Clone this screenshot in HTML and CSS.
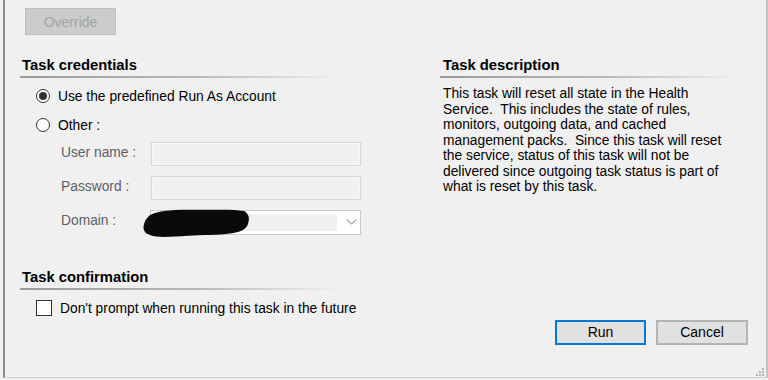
FILE: index.html
```html
<!DOCTYPE html>
<html>
<head>
<meta charset="utf-8">
<link rel="stylesheet" href="styles.css">
</head>
<body>
<div class="frame">
  <div class="top-row">
    <button class="btn btn-disabled" disabled>Override</button>
  </div>
  <div class="main">
    <div class="col-left">
      <section class="section">
        <div class="title title-left">Task credentials</div>
        <div class="radios">
          <div class="choice"><span class="radio checked"></span><span>Use the predefined Run As Account</span></div>
          <div class="choice"><span class="radio"></span><span>Other :</span></div>
        </div>
        <div class="form">
          <span class="lbl">User name :</span><span class="field"></span>
          <span class="lbl">Password :</span><span class="field"></span>
          <span class="lbl">Domain :</span>
          <span class="field select">
            <span class="select-inner"></span>
            <svg class="chevron" width="11" height="6" viewBox="0 0 11 6"><path d="M0.5 0.5 L5.5 5 L10.5 0.5" fill="none" stroke="#a8a8a8" stroke-width="1.1"/></svg>
            <svg class="scribble" width="110" height="30" viewBox="0 0 110 30"><path d="M6 9 C10 5 18 3 28 2.5 C40 1.5 55 2 70 1.8 C82 1.5 94 1.5 101 3 C107 5 108 10 106 16 C104 22 98 24 88 25.5 C76 27 60 27 46 27.8 C34 28.5 22 29.5 14 28.5 C6 27.5 1 24 1.5 19 C2 15 3 12 6 9 Z" fill="#0a0a0a"/><path d="M4 20 C2 22 3 25 6 26 L8 24 Z M100 4 L105 8 L103 3 Z" fill="#0a0a0a"/></svg>
          </span>
        </div>
      </section>
      <section class="section confirm">
        <div class="title title-left">Task confirmation</div>
        <div class="choice check-row"><span class="checkbox"></span><span>Don't prompt when running this task in the future</span></div>
      </section>
    </div>
    <div class="col-right">
      <div class="title title-right">Task description</div>
      <p class="desc">This task will reset all state in the Health<br>Service.&nbsp; This includes the state of rules,<br>monitors, outgoing data, and cached<br>management packs.&nbsp; Since this task will reset<br>the service, status of this task will not be<br>delivered since outgoing task status is part of<br>what is reset by this task.</p>
      <div class="buttons">
        <button class="btn btn-primary">Run</button>
        <button class="btn btn-normal">Cancel</button>
      </div>
    </div>
  </div>
  <svg class="grip" width="8" height="8" viewBox="0 0 8 8">
    <rect x="6" y="0" width="2" height="2" fill="#b4b4b4"/>
    <rect x="3" y="3" width="2" height="2" fill="#b4b4b4"/>
    <rect x="6" y="3" width="2" height="2" fill="#b4b4b4"/>
    <rect x="0" y="6" width="2" height="2" fill="#b4b4b4"/>
    <rect x="3" y="6" width="2" height="2" fill="#b4b4b4"/>
    <rect x="6" y="6" width="2" height="2" fill="#b4b4b4"/>
  </svg>
</div>
</body>
</html>
```
FILE: styles.css
```css
html, body {
  margin: 0;
  padding: 0;
  background: #f0f0f0;
}
body {
  font-family: "Liberation Sans", Arial, sans-serif;
  font-size: 13.8px;
  color: #000;
  width: 768px;
  height: 380px;
  overflow: hidden;
}
.frame {
  position: relative;
  box-sizing: border-box;
  margin-left: 3px;
  width: 765px;
  height: 378px;
  border-left: 2px solid #8a8a8a;
  border-right: 2px solid #c4c4c4;
  border-bottom: 1px solid #cfcfcf;
  padding: 8px 0 0 15px;
}
.top-row {
  display: flex;
  padding-left: 5px;
}
.btn {
  font-family: "Liberation Sans", Arial, sans-serif;
  font-size: 14px;
  box-sizing: border-box;
  margin: 0;
  padding: 0;
  display: flex;
  align-items: center;
  justify-content: center;
}
.btn-disabled {
  width: 91px;
  height: 27px;
  background: #cccccc;
  border: 1px solid #bfbfbf;
  color: #a2a2a2;
}
.main {
  display: grid;
  grid-template-columns: 400px 308px;
  column-gap: 20px;
  margin-top: 20px;
}
.title {
  font-weight: bold;
  font-size: 14.8px;
  line-height: 20px;
  height: 20px;
  padding-bottom: 3px;
  background: linear-gradient(to right, #9a9a9a 0%, #b8b8b8 55%, rgba(240,240,240,0) 100%) left bottom / 100% 2px no-repeat;
}
.title-left {
  width: 318px;
  padding-left: 2px;
}
.title-right {
  width: 297px;
  padding-left: 3px;
}
.radios {
  display: flex;
  flex-direction: column;
  gap: 9px;
  margin-top: 8px;
  padding-left: 16px;
}
.choice {
  display: flex;
  align-items: center;
  gap: 8px;
  height: 20px;
}
.radio {
  box-sizing: border-box;
  width: 14px;
  height: 14px;
  border: 1px solid #333;
  border-radius: 50%;
  background: #fff;
  display: flex;
  align-items: center;
  justify-content: center;
}
.radio.checked::after {
  content: "";
  width: 8px;
  height: 8px;
  border-radius: 50%;
  background: #333;
}
.form {
  display: grid;
  grid-template-columns: 90px 210px;
  grid-auto-rows: 24px;
  row-gap: 10px;
  margin-top: 7px;
  margin-left: 41px;
  align-items: center;
}
.lbl {
  color: #5e5e66;
  line-height: 20px;
  margin-top: -3px;
}
.field {
  box-sizing: border-box;
  height: 24px;
  border: 1px solid #d6d6d6;
  box-shadow: inset 0 0 0 1px #f6f6f6;
  background: #f0f0f0;
}
.select {
  position: relative;
  margin-left: -1px;
  width: 211px;
  height: 25px;
  background: #fff;
  border-color: #c9c9c9;
  box-shadow: none;
  display: flex;
  align-items: center;
  padding: 3px;
}
.select-inner {
  width: 183px;
  height: 17px;
  background: #f0f0f0;
}
.chevron {
  margin-left: 9px;
}
.scribble {
  position: absolute;
  left: -9px;
  top: -3px;
}
.confirm {
  margin-top: 33px;
}
.check-row {
  margin-top: 8px;
  padding-left: 16px;
}
.checkbox {
  box-sizing: border-box;
  width: 16px;
  height: 16px;
  border: 1px solid #333;
  background: #fff;
}
.desc {
  margin: 8px 0 0 0;
  padding-left: 3px;
  line-height: 15.5px;
  white-space: nowrap;
}
.buttons {
  display: flex;
  justify-content: flex-end;
  gap: 10px;
  margin-top: 125px;
}
.btn-primary {
  width: 91px;
  height: 25px;
  background: #e1e1e1;
  border: 2px solid #0078d7;
  color: #000;
}
.btn-normal {
  width: 92px;
  height: 25px;
  background: #e1e1e1;
  border: 2px solid #b4b4b4;
  color: #000;
}
.grip {
  position: absolute;
  right: 2px;
  bottom: 1px;
}
```
